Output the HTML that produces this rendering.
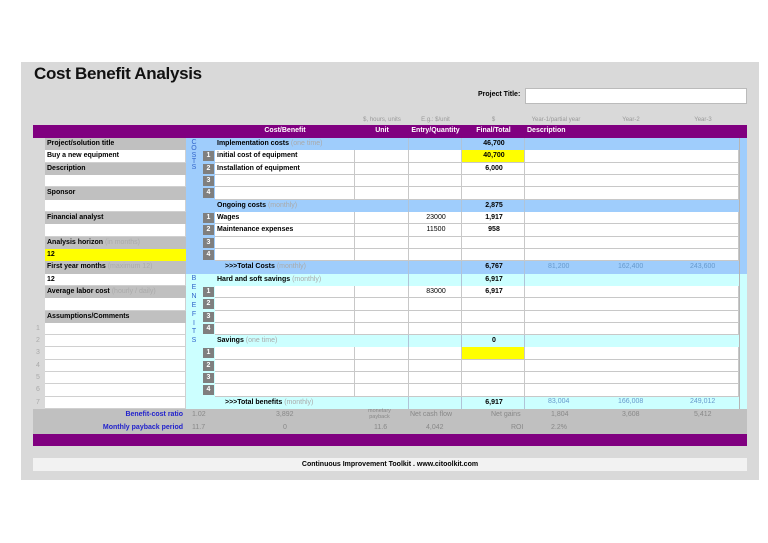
<!DOCTYPE html>
<html><head><meta charset="utf-8"><style>
*{margin:0;padding:0;box-sizing:border-box}
body{width:768px;height:543px;background:#fff;font-family:"Liberation Sans",sans-serif;position:relative;overflow:hidden}
.panel{position:absolute;left:21px;top:62px;width:738px;height:418px;background:#d9d9d9}
.title{position:absolute;left:34px;top:64px;font-size:17px;font-weight:bold;color:#111;letter-spacing:-0.3px}
.pt{position:absolute;left:478px;top:91px;font-size:7px;font-weight:bold}
.ptin{position:absolute;left:525px;top:88px;width:222px;height:16px;background:#fff;border:1px solid #bbb}
.hint{position:absolute;top:117px;font-size:6px;color:#999;text-align:center}
.hdr{position:absolute;left:33px;top:125px;width:714px;height:13px;background:#800080;color:#fff;font-size:7px;font-weight:bold}
.hdr span{position:absolute;top:2px;text-align:center}
.row{position:absolute;left:33px;width:714px;height:12.32px;display:flex;font-size:7px;line-height:11px}
.row i{font-style:normal;display:block;height:100%;white-space:nowrap;overflow:hidden;padding-left:2px}
.n{width:12px;color:#aaa;padding-left:3px!important}
.l{width:141px}
.lt{width:17px}.b{width:12px;padding:1px 0 0 0!important}.c{width:140px}.u{width:54px}.e{width:53px;text-align:center}.f{width:63px;text-align:center;font-weight:bold}.d{width:214px}.x{width:8px}
.G{background:#c0c0c0;font-weight:bold}
.W{background:#fff;border:1px solid #d0d0d0;border-width:0 1px 1px 0;font-weight:bold}
.Y{background:#ffff00;font-weight:bold}
.bl{background:#9fcdfc}
.cy{background:#ccffff}
.w{background:#fff;border-bottom:1px solid #c8c8c8;border-right:1px solid #c8c8c8}
.bd{border-right:1px solid #b0c4d8}
.x{border-left:1px solid #b5b5b5}
.b s{display:block;text-decoration:none;width:11px;height:10px;background:#7f7f7f;color:#fff;font-weight:bold;text-align:center;line-height:10px;font-size:7px}
.hb{font-weight:bold}
.gr{color:#aaa;font-weight:normal}
.f.w,.e.w{color:#000}
.yv{color:#6699cc;position:absolute;font-size:7px}
.letters{position:absolute;left:190px;color:#3366cc;font-size:7px;text-align:center;width:8px}
.rat{position:absolute;left:33px;width:714px;height:12.5px;background:#c0c0c0;font-size:7px}
.rat span{position:absolute;top:2px;color:#888}
.rat .lb{color:#2222cc;font-weight:bold;right:564px}
.purp{position:absolute;left:33px;top:434px;width:714px;height:12px;background:#800080}
.foot{position:absolute;left:33px;top:458px;width:714px;height:13px;background:#f2f2f2;font-size:7px;font-weight:bold;text-align:center;line-height:13px}
</style></head><body>
<div class="panel"></div>
<div class="title">Cost Benefit Analysis</div>
<div class="pt">Project Title:</div><div class="ptin"></div>
<div class="hint" style="left:355px;width:54px">$, hours, units</div>
<div class="hint" style="left:409px;width:53px">E.g.: $/unit</div>
<div class="hint" style="left:462px;width:63px">$</div>
<div class="hint" style="left:520px;width:72px">Year-1/partial year</div>
<div class="hint" style="left:600px;width:62px">Year-2</div>
<div class="hint" style="left:672px;width:62px">Year-3</div>
<div class="hdr"><span style="left:182px;width:140px">Cost/Benefit</span><span style="left:322px;width:54px">Unit</span><span style="left:376px;width:53px">Entry/Quantity</span><span style="left:429px;width:63px">Final/Total</span><span style="left:494px">Description</span></div>

<div class="row" style="top:138px"><i class="n"></i><i class="l G">Project/solution title</i><i class="lt bl"></i><i class="b bl"></i><i class="c bl hb">Implementation costs <span class="gr">(one time)</span></i><i class="u bl bd"></i><i class="e bl bd"></i><i class="f bl bd">46,700</i><i class="d bl"></i><i class="x bl"></i></div>
<div class="row" style="top:150.3px"><i class="n"></i><i class="l W">Buy a new equipment</i><i class="lt bl"></i><i class="b bl"><s>1</s></i><i class="c w hb">initial cost of equipment</i><i class="u w"></i><i class="e w"></i><i class="f w" style="background:#ffff00">40,700</i><i class="d w"></i><i class="x bl"></i></div>
<div class="row" style="top:162.6px"><i class="n"></i><i class="l G">Description</i><i class="lt bl"></i><i class="b bl"><s>2</s></i><i class="c w hb">Installation of equipment</i><i class="u w"></i><i class="e w"></i><i class="f w">6,000</i><i class="d w"></i><i class="x bl"></i></div>
<div class="row" style="top:175px"><i class="n"></i><i class="l W"></i><i class="lt bl"></i><i class="b bl"><s>3</s></i><i class="c w"></i><i class="u w"></i><i class="e w"></i><i class="f w"></i><i class="d w"></i><i class="x bl"></i></div>
<div class="row" style="top:187.3px"><i class="n"></i><i class="l G">Sponsor</i><i class="lt bl"></i><i class="b bl"><s>4</s></i><i class="c w"></i><i class="u w"></i><i class="e w"></i><i class="f w"></i><i class="d w"></i><i class="x bl"></i></div>
<div class="row" style="top:199.6px"><i class="n"></i><i class="l W"></i><i class="lt bl"></i><i class="b bl"></i><i class="c bl hb">Ongoing costs <span class="gr">(monthly)</span></i><i class="u bl bd"></i><i class="e bl bd"></i><i class="f bl bd">2,875</i><i class="d bl"></i><i class="x bl"></i></div>
<div class="row" style="top:211.9px"><i class="n"></i><i class="l G">Financial analyst</i><i class="lt bl"></i><i class="b bl"><s>1</s></i><i class="c w hb">Wages</i><i class="u w"></i><i class="e w">23000</i><i class="f w">1,917</i><i class="d w"></i><i class="x bl"></i></div>
<div class="row" style="top:224.2px"><i class="n"></i><i class="l W"></i><i class="lt bl"></i><i class="b bl"><s>2</s></i><i class="c w hb">Maintenance expenses</i><i class="u w"></i><i class="e w">11500</i><i class="f w">958</i><i class="d w"></i><i class="x bl"></i></div>
<div class="row" style="top:236.6px"><i class="n"></i><i class="l G">Analysis horizon <span class="gr">(in months)</span></i><i class="lt bl"></i><i class="b bl"><s>3</s></i><i class="c w"></i><i class="u w"></i><i class="e w"></i><i class="f w"></i><i class="d w"></i><i class="x bl"></i></div>
<div class="row" style="top:248.9px"><i class="n"></i><i class="l Y">12</i><i class="lt bl"></i><i class="b bl"><s>4</s></i><i class="c w"></i><i class="u w"></i><i class="e w"></i><i class="f w"></i><i class="d w"></i><i class="x bl"></i></div>
<div class="row" style="top:261.2px"><i class="n"></i><i class="l G">First year months <span class="gr">(maximum 12)</span></i><i class="lt bl"></i><i class="b bl"></i><i class="c bl hb" style="padding-left:10px">&gt;&gt;&gt;Total Costs <span class="gr">(monthly)</span></i><i class="u bl bd"></i><i class="e bl bd"></i><i class="f bl bd">6,767</i><i class="d bl"></i><i class="x bl"></i></div>
<div class="row" style="top:273.5px"><i class="n"></i><i class="l W">12</i><i class="lt cy"></i><i class="b cy"></i><i class="c cy hb">Hard and soft savings <span class="gr">(monthly)</span></i><i class="u cy bd"></i><i class="e cy bd"></i><i class="f cy bd">6,917</i><i class="d cy"></i><i class="x cy"></i></div>
<div class="row" style="top:285.8px"><i class="n"></i><i class="l G">Average labor cost <span class="gr">(hourly / daily)</span></i><i class="lt cy"></i><i class="b cy"><s>1</s></i><i class="c w"></i><i class="u w"></i><i class="e w">83000</i><i class="f w">6,917</i><i class="d w"></i><i class="x cy"></i></div>
<div class="row" style="top:298.2px"><i class="n"></i><i class="l W"></i><i class="lt cy"></i><i class="b cy"><s>2</s></i><i class="c w"></i><i class="u w"></i><i class="e w"></i><i class="f w"></i><i class="d w"></i><i class="x cy"></i></div>
<div class="row" style="top:310.5px"><i class="n"></i><i class="l G">Assumptions/Comments</i><i class="lt cy"></i><i class="b cy"><s>3</s></i><i class="c w"></i><i class="u w"></i><i class="e w"></i><i class="f w"></i><i class="d w"></i><i class="x cy"></i></div>
<div class="row" style="top:322.8px"><i class="n">1</i><i class="l W"></i><i class="lt cy"></i><i class="b cy"><s>4</s></i><i class="c w"></i><i class="u w"></i><i class="e w"></i><i class="f w"></i><i class="d w"></i><i class="x cy"></i></div>
<div class="row" style="top:335.1px"><i class="n">2</i><i class="l W"></i><i class="lt cy"></i><i class="b cy"></i><i class="c cy hb">Savings <span class="gr">(one time)</span></i><i class="u cy bd"></i><i class="e cy bd"></i><i class="f cy bd">0</i><i class="d cy"></i><i class="x cy"></i></div>
<div class="row" style="top:347.4px"><i class="n">3</i><i class="l W"></i><i class="lt cy"></i><i class="b cy"><s>1</s></i><i class="c w"></i><i class="u w"></i><i class="e w"></i><i class="f w" style="background:#ffff00"></i><i class="d w"></i><i class="x cy"></i></div>
<div class="row" style="top:359.8px"><i class="n">4</i><i class="l W"></i><i class="lt cy"></i><i class="b cy"><s>2</s></i><i class="c w"></i><i class="u w"></i><i class="e w"></i><i class="f w"></i><i class="d w"></i><i class="x cy"></i></div>
<div class="row" style="top:372.1px"><i class="n">5</i><i class="l W"></i><i class="lt cy"></i><i class="b cy"><s>3</s></i><i class="c w"></i><i class="u w"></i><i class="e w"></i><i class="f w"></i><i class="d w"></i><i class="x cy"></i></div>
<div class="row" style="top:384.4px"><i class="n">6</i><i class="l W"></i><i class="lt cy"></i><i class="b cy"><s>4</s></i><i class="c w"></i><i class="u w"></i><i class="e w"></i><i class="f w"></i><i class="d w"></i><i class="x cy"></i></div>
<div class="row" style="top:396.7px"><i class="n">7</i><i class="l W"></i><i class="lt cy"></i><i class="b cy"></i><i class="c cy hb" style="padding-left:10px">&gt;&gt;&gt;Total benefits <span class="gr">(monthly)</span></i><i class="u cy bd"></i><i class="e cy bd"></i><i class="f cy bd">6,917</i><i class="d cy"></i><i class="x cy"></i></div>

<span class="yv" style="left:548px;top:263px">81,200</span>
<span class="yv" style="left:618px;top:263px">162,400</span>
<span class="yv" style="left:690px;top:263px">243,600</span>
<span class="yv" style="left:548px;top:398px">83,004</span>
<span class="yv" style="left:618px;top:398px">166,008</span>
<span class="yv" style="left:690px;top:398px">249,012</span>

<div class="letters" style="top:140px;line-height:6.3px">C<br>O<br>S<br>T<br>S</div>
<div class="letters" style="top:275px;line-height:8.9px">B<br>E<br>N<br>E<br>F<br>I<br>T<br>S</div>

<div class="rat" style="top:409px"><span class="lb">Benefit-cost ratio</span><span style="left:159px">1.02</span><span style="left:243px">3,892</span><span style="left:335px;top:-1px;font-size:5.5px;line-height:6px;text-align:center">monetary<br>payback</span><span style="left:377px">Net cash flow</span><span style="left:458px">Net gains</span><span style="left:518px">1,804</span><span style="left:589px">3,608</span><span style="left:661px">5,412</span></div>
<div class="rat" style="top:421.5px"><span class="lb">Monthly payback period</span><span style="left:159px">11.7</span><span style="left:250px">0</span><span style="left:341px">11.6</span><span style="left:393px">4,042</span><span style="left:478px">ROI</span><span style="left:518px">2.2%</span></div>
<div class="purp"></div>
<div class="foot">Continuous Improvement Toolkit . www.citoolkit.com</div>
</body></html>
